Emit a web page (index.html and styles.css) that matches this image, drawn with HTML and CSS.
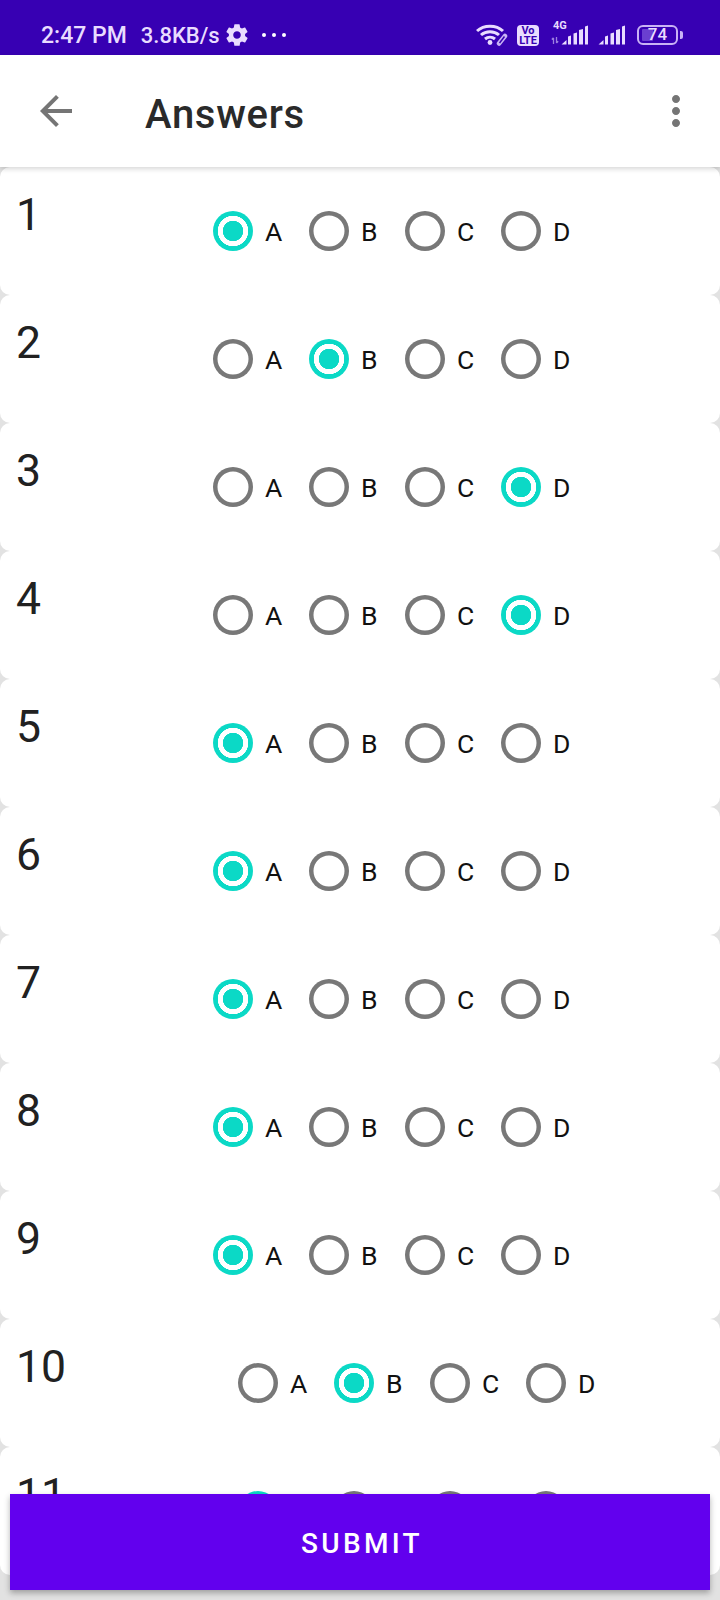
FILE: index.html
```html
<!DOCTYPE html>
<html lang="en">
<head>
    <meta charset="UTF-8">
    <meta name="viewport" content="width=device-width, initial-scale=1.0">
    <title>Answers</title>
    <link rel="stylesheet" href="styles.css">
</head>
<body>

    <div class="screen">
        <div class="statusbar">
            <span class="time">2:47 PM</span>
            <span class="speed">3.8KB/s</span>
            <svg class="gear" viewBox="0 0 24 24"><path d="M19.4 13c.05-.33.1-.66.1-1s-.05-.67-.1-1l2.1-1.65c.2-.15.25-.42.12-.64l-2-3.46c-.12-.22-.39-.3-.61-.22l-2.49 1c-.52-.4-1.08-.73-1.69-.98l-.38-2.65C14.46 2.18 14.25 2 14 2h-4c-.25 0-.46.18-.49.42l-.38 2.65c-.61.25-1.17.59-1.69.98l-2.49-1c-.23-.09-.49 0-.61.22l-2 3.46c-.13.22-.07.49.12.64L4.57 11c-.04.32-.07.65-.07 1s.03.68.07 1l-2.11 1.65c-.19.15-.24.42-.12.64l2 3.46c.12.22.39.3.61.22l2.49-1c.52.4 1.08.73 1.69.98l.38 2.65c.03.24.24.42.49.42h4c.25 0 .46-.18.49-.42l.38-2.65c.61-.25 1.17-.59 1.69-.98l2.49 1c.23.09.49 0 .61-.22l2-3.46c.12-.22.07-.49-.12-.64L19.4 13zM12 15.5c-1.93 0-3.5-1.57-3.5-3.5s1.57-3.5 3.5-3.5 3.5 1.57 3.5 3.5-1.57 3.5-3.5 3.5z"/></svg>
            <span class="dots"><i></i><i></i><i></i></span>

            <div class="status-right">
                <svg class="wifi" viewBox="0 0 32 22">
                    <path d="M1 7C8 .5 20 .5 27 7" />
                    <path d="M5 11C10 6.500 18 6.500 23 11" />
                    <path d="M9 15C12 12.500 16 12.500 19 15" />
                    <circle class="wifi-dot" cx="14" cy="18.500" r="2.400" />
                    <path class="wifi-link" d="M23 19.500L29 12" />
                    <path class="wifi-link-in" d="M23.500 19L28.500 12.500" />
                </svg>
                <span class="volte">Vo<br>LTE</span>
                <div class="signal">
                    <span class="net">4G</span>
                    <svg viewBox="0 0 38 20">
                        <path class="arrows" d="M2.500 19v-6M.8 14.500l1.700-1.700M5.500 12v6M5.500 18l1.700-1.700" />
                        <path d="M10.500 19.500l5-4.500v4.500zM17 19.500V11.500l3-1v9zM22.500 19.500V8.500l3.500-1v12zM28 19.500V5l4-1v15.500zM34 19.500V1.500l3-1v19z" />
                    </svg>
                </div>
                <svg class="signal-two" viewBox="0 0 28 20"><path d="M.5 19.500l5-4.500v4.500zM7 19.500V11.500l3-1v9zM12.500 19.500V8.500l3.500-1v12zM18 19.500V5l4-1v15.500zM24 19.500V1.500l3-1v19z" /></svg>
                <div class="battery">
                    <span class="battery-body"><span class="battery-fill"></span><span class="battery-num">74</span></span>
                    <span class="battery-tip"></span>
                </div>
            </div>
        </div>

        <div class="toolbar">
            <svg class="back" viewBox="0 0 24 24"><path d="M20 11H7.83l5.59-5.59L12 4l-8 8 8 8 1.41-1.41L7.83 13H20v-2z"/></svg>
            <div class="title">Answers</div>
            <svg class="more" viewBox="0 0 24 24"><path d="M12 8c1.100 0 2-.9 2-2s-.9-2-2-2-2 .9-2 2 .9 2 2 2zm0 2c-1.100 0-2 .9-2 2s.9 2 2 2 2-.9 2-2-.9-2-2-2zm0 6c-1.100 0-2 .9-2 2s.9 2 2 2 2-.9 2-2-.9-2-2-2z"/></svg>
        </div>

        <div class="list">
            <div class="row"><div class="num">1</div><div class="choices"><span class="radio on"></span><span class="label">A</span><span class="radio"></span><span class="label">B</span><span class="radio"></span><span class="label">C</span><span class="radio"></span><span class="label">D</span></div></div>
            <div class="row"><div class="num">2</div><div class="choices"><span class="radio"></span><span class="label">A</span><span class="radio on"></span><span class="label">B</span><span class="radio"></span><span class="label">C</span><span class="radio"></span><span class="label">D</span></div></div>
            <div class="row"><div class="num">3</div><div class="choices"><span class="radio"></span><span class="label">A</span><span class="radio"></span><span class="label">B</span><span class="radio"></span><span class="label">C</span><span class="radio on"></span><span class="label">D</span></div></div>
            <div class="row"><div class="num">4</div><div class="choices"><span class="radio"></span><span class="label">A</span><span class="radio"></span><span class="label">B</span><span class="radio"></span><span class="label">C</span><span class="radio on"></span><span class="label">D</span></div></div>
            <div class="row"><div class="num">5</div><div class="choices"><span class="radio on"></span><span class="label">A</span><span class="radio"></span><span class="label">B</span><span class="radio"></span><span class="label">C</span><span class="radio"></span><span class="label">D</span></div></div>
            <div class="row"><div class="num">6</div><div class="choices"><span class="radio on"></span><span class="label">A</span><span class="radio"></span><span class="label">B</span><span class="radio"></span><span class="label">C</span><span class="radio"></span><span class="label">D</span></div></div>
            <div class="row"><div class="num">7</div><div class="choices"><span class="radio on"></span><span class="label">A</span><span class="radio"></span><span class="label">B</span><span class="radio"></span><span class="label">C</span><span class="radio"></span><span class="label">D</span></div></div>
            <div class="row"><div class="num">8</div><div class="choices"><span class="radio on"></span><span class="label">A</span><span class="radio"></span><span class="label">B</span><span class="radio"></span><span class="label">C</span><span class="radio"></span><span class="label">D</span></div></div>
            <div class="row"><div class="num">9</div><div class="choices"><span class="radio on"></span><span class="label">A</span><span class="radio"></span><span class="label">B</span><span class="radio"></span><span class="label">C</span><span class="radio"></span><span class="label">D</span></div></div>
            <div class="row"><div class="num">10</div><div class="choices"><span class="radio"></span><span class="label">A</span><span class="radio on"></span><span class="label">B</span><span class="radio"></span><span class="label">C</span><span class="radio"></span><span class="label">D</span></div></div>
            <div class="row"><div class="num">11</div><div class="choices"><span class="radio on"></span><span class="label">A</span><span class="radio"></span><span class="label">B</span><span class="radio"></span><span class="label">C</span><span class="radio"></span><span class="label">D</span></div></div>
        </div>

        <button class="submit">SUBMIT</button>
    </div>

</body>
</html>
```

FILE: styles.css
```css
body {
    margin: 0;
    font-family: Roboto, "Liberation Sans", sans-serif;
    background-color: #fff;
}

.screen {
    position: relative;
    width: 720px;
    height: 1600px;
    overflow: hidden;
    display: flex;
    flex-direction: column;
    background-color: #fff;
}

/* status bar */
.statusbar {
    height: 55px;
    flex: none;
    display: flex;
    align-items: center;
    padding: 15px 37px 0 41px;
    box-sizing: border-box;
    background-color: #3700b3;
    color: #e9dcff;
    font-size: 22px;
    font-weight: 500;
}

.time {
    margin-right: 14px;
    font-size: 23px;
}

.gear {
    width: 26px;
    height: 26px;
    margin-left: 4px;
    fill: #e9dcff;
}

.dots {
    display: flex;
    gap: 6px;
    margin-left: 12px;
}

.dots i {
    width: 4px;
    height: 4px;
    border-radius: 50%;
    background-color: #fff;
}

.status-right {
    margin-left: auto;
    display: flex;
    align-items: center;
}

.wifi {
    width: 32px;
    height: 22px;
    fill: none;
    stroke: #e9dcff;
    stroke-width: 3;
}

.wifi-dot {
    fill: #e9dcff;
    stroke: none;
}

.wifi-link {
    stroke: #c9b3f5;
    stroke-width: 4.500;
    stroke-linecap: round;
}

.wifi-link-in {
    stroke: #3700b3;
    stroke-width: 1.500;
}

.volte {
    width: 22px;
    height: 21px;
    margin-left: 9px;
    padding-top: 1px;
    box-sizing: border-box;
    border-radius: 4px;
    background-color: #e9dcff;
    color: #3700b3;
    font-size: 11px;
    font-weight: 700;
    line-height: 10px;
    text-align: center;
}

.signal {
    position: relative;
    width: 38px;
    height: 20px;
    margin-left: 12px;
}

.signal svg {
    display: block;
    width: 38px;
    height: 20px;
    fill: #e9dcff;
}

.arrows {
    fill: none;
    stroke: #9d7fe0;
    stroke-width: 1.300;
}

.net {
    position: absolute;
    left: 2px;
    top: -4px;
    font-size: 11px;
    font-weight: 700;
    line-height: 10px;
}

.signal-two {
    width: 28px;
    height: 20px;
    margin-left: 9px;
    fill: #e9dcff;
}

.battery {
    display: flex;
    align-items: center;
    margin-left: 11px;
}

.battery-body {
    position: relative;
    width: 41px;
    height: 20px;
    box-sizing: border-box;
    border: 2.500px solid #c9b3f5;
    border-radius: 6px;
}

.battery-fill {
    position: absolute;
    left: 3px;
    top: 2px;
    bottom: 2px;
    width: 11px;
    border-radius: 1px;
    background-color: #6a3fd0;
}

.battery-num {
    position: absolute;
    left: 0;
    right: 0;
    top: 0;
    line-height: 15px;
    text-align: center;
    font-size: 17px;
    color: #e9dcff;
}

.battery-tip {
    width: 3px;
    height: 8px;
    margin-left: 2px;
    border-radius: 0 2px 2px 0;
    background-color: #c9b3f5;
}

/* toolbar */
.toolbar {
    height: 112px;
    flex: none;
    position: relative;
    z-index: 1;
    display: flex;
    align-items: center;
    padding: 0 20px 0 32px;
    background-color: #fff;
    box-shadow: 0 2px 5px rgba(0, 0, 0, 0.16);
}

.back,
.more {
    width: 48px;
    height: 48px;
    fill: #757575;
}

.title {
    margin: 7px 0 0 65px;
    font-size: 40px;
    font-weight: 500;
    color: #2a2a2a;
    letter-spacing: 0.7px;
}

.more {
    margin-left: auto;
}

/* answer rows */
.list {
    flex: 1;
    overflow: hidden;
    background-color: #e2e2e2;
}

.row {
    height: 128px;
    display: flex;
    align-items: center;
    padding-left: 16px;
    box-sizing: border-box;
    border-radius: 10px;
    background-color: #fff;
}

.num {
    align-self: flex-start;
    margin-top: 22px;
    font-size: 44.500px;
    line-height: 53px;
    color: #212121;
}

.choices {
    display: flex;
    align-items: center;
    margin-left: 172px;
}

.radio {
    width: 40px;
    height: 40px;
    border-radius: 50%;
    box-shadow: inset 0 0 0 4.500px #787878;
}

.radio.on {
    background: radial-gradient(circle, #0bd9c6 10px, #fff 10.500px, #fff 15px, #0bd9c6 15.500px);
    box-shadow: none;
}

.label {
    width: 56px;
    padding: 1px 0 0 12px;
    box-sizing: border-box;
    font-size: 26.500px;
    color: #111;
}

/* submit button lies over the list */
.submit {
    position: absolute;
    left: 10px;
    top: 1494px;
    width: 700px;
    height: 96px;
    padding: 3px 0 0 4px;
    border: none;
    background-color: #6200ee;
    color: #fff;
    font-family: Roboto, "Liberation Sans", sans-serif;
    font-size: 28px;
    font-weight: 500;
    letter-spacing: 3.300px;
    box-shadow: 0 3px 6px rgba(0, 0, 0, 0.3);
}
```
